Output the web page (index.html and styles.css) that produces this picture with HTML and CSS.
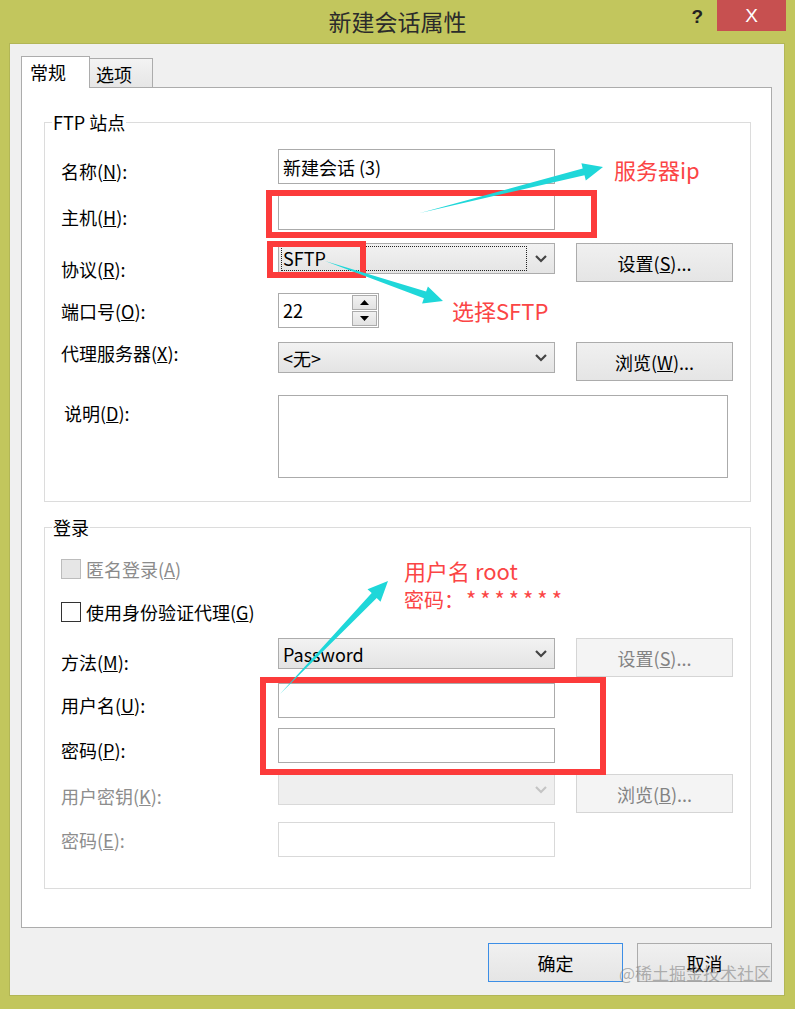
FILE: index.html
```html
<!DOCTYPE html>
<html lang="zh-CN">
<head>
    <meta charset="UTF-8">
    <meta name="viewport" content="width=device-width, initial-scale=1.0">
    <title>新建会话属性</title>
    <link rel="stylesheet" href="styles.css">
</head>
<body>
    <div class="titlebar">
        <div class="title">新建会话属性</div>
        <div class="window-buttons">
            <span class="help">?</span>
            <span class="close">X</span>
        </div>
    </div>

    <div class="client">
        <div class="tabs">
            <div class="tab active">常规</div>
            <div class="tab">选项</div>
        </div>

        <div class="panel">
            <!-- FTP 站点 -->
            <fieldset class="group">
                <legend>FTP 站点</legend>
                <div class="fields ftp-fields">
                    <label class="lbl">名称(<u>N</u>):</label>
                    <div class="textbox">新建会话 (3)</div>
                    <div></div>

                    <label class="lbl">主机(<u>H</u>):</label>
                    <div class="textbox"></div>
                    <div></div>

                    <label class="lbl lbl-proto">协议(<u>R</u>):</label>
                    <div class="combo">
                        <span class="combo-value focused">SFTP</span>
                        <span class="chevron"><svg width="12" height="8" viewBox="0 0 12 8"><polyline points="1,1 6,6 11,1"/></svg></span>
                    </div>
                    <button class="btn">设置(<u>S</u>)...</button>

                    <label class="lbl lbl-port">端口号(<u>O</u>):</label>
                    <div class="spin">
                        <span class="spin-value">22</span>
                        <span class="spin-arrows">
                            <span class="spin-btn"><svg width="9" height="5" viewBox="0 0 9 5"><polygon points="0,5 4.5,0 9,5"/></svg></span>
                            <span class="spin-btn"><svg width="9" height="5" viewBox="0 0 9 5"><polygon points="0,0 9,0 4.5,5"/></svg></span>
                        </span>
                    </div>
                    <div></div>

                    <label class="lbl lbl-proxy">代理服务器(<u>X</u>):</label>
                    <div class="combo">
                        <span class="combo-value">&lt;无&gt;</span>
                        <span class="chevron"><svg width="12" height="8" viewBox="0 0 12 8"><polyline points="1,1 6,6 11,1"/></svg></span>
                    </div>
                    <button class="btn">浏览(<u>W</u>)...</button>

                    <label class="lbl lbl-desc">说明(<u>D</u>):</label>
                    <div class="memo"></div>
                </div>
            </fieldset>

            <!-- 登录 -->
            <fieldset class="group login">
                <legend>登录</legend>
                <div class="checks">
                    <div class="check disabled"><span class="box"></span><span>匿名登录(<u>A</u>)</span></div>
                    <div class="check"><span class="box"></span><span>使用身份验证代理(<u>G</u>)</span></div>
                </div>
                <div class="fields login-fields">
                    <label class="lbl lbl-method">方法(<u>M</u>):</label>
                    <div class="combo">
                        <span class="combo-value">Password</span>
                        <span class="chevron"><svg width="12" height="8" viewBox="0 0 12 8"><polyline points="1,1 6,6 11,1"/></svg></span>
                    </div>
                    <button class="btn disabled">设置(<u>S</u>)...</button>

                    <label class="lbl">用户名(<u>U</u>):</label>
                    <div class="textbox"></div>
                    <div></div>

                    <label class="lbl">密码(<u>P</u>):</label>
                    <div class="textbox"></div>
                    <div></div>

                    <label class="lbl disabled">用户密钥(<u>K</u>):</label>
                    <div class="combo disabled">
                        <span class="combo-value"></span>
                        <span class="chevron"><svg width="12" height="8" viewBox="0 0 12 8"><polyline points="1,1 6,6 11,1"/></svg></span>
                    </div>
                    <button class="btn disabled">浏览(<u>B</u>)...</button>

                    <label class="lbl lbl-passkey disabled">密码(<u>E</u>):</label>
                    <div class="textbox disabled"></div>
                    <div></div>
                </div>
            </fieldset>
        </div>

        <div class="footer">
            <button class="btn default">确定</button>
            <button class="btn">取消</button>
        </div>
    </div>

    <!-- 标注 -->
    <svg class="marks" width="795" height="1009" viewBox="0 0 795 1009">
        <g fill="none" stroke="#fc3b3b" stroke-width="6">
            <rect x="269" y="193" width="325" height="42"/>
            <rect x="270" y="244" width="93" height="31"/>
            <rect x="263" y="680" width="340" height="92"/>
        </g>
        <g fill="#1fd7d9">
            <polygon points="420,213 582.7,168.5 581.4,163.2 603,167 585.8,180.6 584.5,175.3"/>
            <polygon points="325,261 426.1,291.6 427.9,286.4 443,301 422.1,303.4 423.9,298.2"/>
            <polygon points="280,694 371.7,593.1 367.5,589.3 388,581 380.5,601.7 376.7,597.9"/>
        </g>
    </svg>
    <div class="note note-host">服务器ip</div>
    <div class="note note-proto">选择SFTP</div>
    <div class="note note-user">用户名 root</div>
    <div class="note note-pass">密码：<span class="stars">*******</span></div>

    <div class="watermark">@稀土掘金技术社区</div>
</body>
</html>
```

FILE: styles.css
```css
* {
    box-sizing: border-box;
}

body {
    margin: 0;
    width: 795px;
    height: 1009px;
    position: relative;
    overflow: hidden;
    background-color: #c2c65d;
    font-family: "Noto Sans CJK SC", sans-serif;
    font-size: 18px;
    line-height: 20px;
    color: #000;
}

/* barra de título */
.titlebar {
    height: 43px;
    display: grid;
    grid-template-columns: 1fr auto 1fr;
}

.title {
    grid-column: 2;
    font-size: 23px;
    line-height: 42px;
    color: #2b2b2b;
}

.window-buttons {
    grid-column: 3;
    display: flex;
    justify-content: flex-end;
    align-items: flex-start;
    padding-right: 9px;
}

.help {
    margin-top: 7px;
    margin-right: 14px;
    font-family: "Liberation Sans", sans-serif;
    font-weight: bold;
    font-size: 19px;
    color: #222;
}

.close {
    width: 69px;
    height: 31px;
    background-color: #c75050;
    color: #fff;
    font-family: "Liberation Sans", sans-serif;
    font-size: 19px;
    line-height: 31px;
    text-align: center;
}

/* área cliente */
.client {
    margin: 0 10px 0 9px;
    height: 953px;
    background-color: #f0f0f0;
    border: 1px solid #b2b656;
    padding: 12px 12px 0 11px;
}

.tabs {
    display: flex;
    align-items: flex-end;
    height: 31px;
}

.tab {
    width: 63px;
    height: 29px;
    padding-left: 6px;
    border: 1px solid #acacac;
    border-bottom: none;
    background: linear-gradient(#f3f3f3, #e6e6e6);
    line-height: 30px;
}

.tab.active {
    width: 69px;
    height: 32px;
    margin-bottom: -1px;
    padding-left: 8px;
    background: #fff;
    position: relative;
    z-index: 1;
    line-height: 31px;
}

.tab + .tab {
    border-left: none;
}

.panel {
    height: 841px;
    background-color: #fff;
    border: 1px solid #acacac;
    padding: 24px 20px 0 22px;
}

.group {
    margin: 0;
    padding: 0;
    min-width: 0;
    border: 1px solid #dcdcdc;
}

.group legend {
    margin-left: 7px;
    padding: 0 1px;
    line-height: 20px;
}

.group.login {
    margin-top: 15px;
}

.fields {
    display: grid;
    grid-template-columns: 196px 277px 157px;
    column-gap: 21px;
    align-items: start;
    padding-left: 16px;
}

.ftp-fields {
    grid-template-rows: 46px 48px 49px 50px 53px 83px;
    padding-top: 17px;
    padding-bottom: 23px;
}

.login-fields {
    grid-template-rows: 45px 45px 46px 48px 35px;
    margin-top: 16px;
    padding-bottom: 31px;
}

.lbl {
    padding-top: 12px;
    white-space: nowrap;
}

.lbl-proto {
    padding-top: 16px;
}

.lbl-port {
    padding-top: 9px;
}

.lbl-proxy {
    padding-top: 1px;
}

.lbl-desc {
    padding-top: 8px;
    padding-left: 3px;
}

.lbl-method {
    padding-top: 14px;
}

.lbl-passkey {
    padding-top: 8px;
}

.lbl.disabled {
    color: #8d8d8d;
}

/* controles */
.textbox {
    height: 35px;
    display: flex;
    align-items: center;
    padding-left: 4px;
    background-color: #fff;
    border: 1px solid #ababab;
}

.textbox.disabled {
    border-color: #d9d9d9;
}

.memo {
    grid-column: span 2;
    width: 450px;
    height: 83px;
    background-color: #fff;
    border: 1px solid #ababab;
}

.combo {
    height: 31px;
    display: flex;
    align-items: center;
    border: 1px solid #acacac;
    background: linear-gradient(#f2f2f2, #e4e4e4);
}

.combo-value {
    flex: 1;
    padding-left: 4px;
    white-space: nowrap;
}

.combo-value.focused {
    align-self: stretch;
    margin: 2px 0 2px 2px;
    padding-left: 1px;
    border: 1px dotted #222;
    line-height: 23px;
}

.chevron {
    width: 27px;
    display: flex;
    justify-content: center;
}

.chevron polyline {
    fill: none;
    stroke: #444;
    stroke-width: 2.2;
}

.combo.disabled {
    background: #efefef;
    border-color: #d9d9d9;
}

.combo.disabled polyline {
    stroke: #c4c4c4;
}

.spin {
    width: 101px;
    height: 35px;
    margin-top: 1px;
    display: flex;
    background-color: #fff;
    border: 1px solid #ababab;
}

.spin-value {
    flex: 1;
    padding-left: 4px;
    line-height: 33px;
}

.spin-arrows {
    width: 26px;
    display: flex;
    flex-direction: column;
    gap: 1px;
    padding: 1px 1px 1px 0;
}

.spin-btn {
    flex: 1;
    display: flex;
    align-items: center;
    justify-content: center;
    border: 1px solid #acacac;
    background: linear-gradient(#f2f2f2, #e2e2e2);
}

.btn {
    height: 39px;
    padding: 0;
    font-family: inherit;
    font-size: 18px;
    line-height: 20px;
    color: #000;
    border: 1px solid #acacac;
    background: linear-gradient(#f0f0f0, #e5e5e5);
}

.btn.disabled {
    color: #838383;
    border-color: #d5d5d5;
    background: #f4f4f4;
}

.btn.default {
    border-color: #3c8ee6;
}

/* casillas */
.checks {
    padding: 22px 0 0 16px;
}

.check {
    height: 20px;
    display: flex;
    align-items: center;
    gap: 5px;
    white-space: nowrap;
}

.check + .check {
    margin-top: 23px;
}

.check .box {
    width: 20px;
    height: 20px;
    background-color: #fff;
    border: 1px solid #333;
}

.check.disabled {
    color: #8b8b8b;
}

.check.disabled .box {
    background-color: #e6e6e6;
    border-color: #bcbcbc;
}

.footer {
    display: flex;
    justify-content: flex-end;
    gap: 14px;
    margin-top: 15px;
}

.footer .btn {
    width: 135px;
}

/* anotaciones encima del diálogo */
.marks {
    position: absolute;
    top: 0;
    left: 0;
    pointer-events: none;
}

.note {
    position: absolute;
    color: #fb4545;
    font-size: 22px;
    line-height: 24px;
    white-space: nowrap;
}

.note-host {
    left: 614px;
    top: 157px;
}

.note-proto {
    left: 452px;
    top: 298px;
}

.note-user {
    left: 404px;
    top: 558px;
}

.note-pass {
    left: 404px;
    top: 587px;
    font-size: 20px;
    line-height: 22px;
}

.stars {
    margin-left: 2px;
    font-size: 22px;
    letter-spacing: 4px;
}

.watermark {
    position: absolute;
    left: 619px;
    top: 963px;
    font-size: 17px;
    line-height: 20px;
    color: rgba(120, 120, 120, 0.55);
    white-space: nowrap;
}
```
